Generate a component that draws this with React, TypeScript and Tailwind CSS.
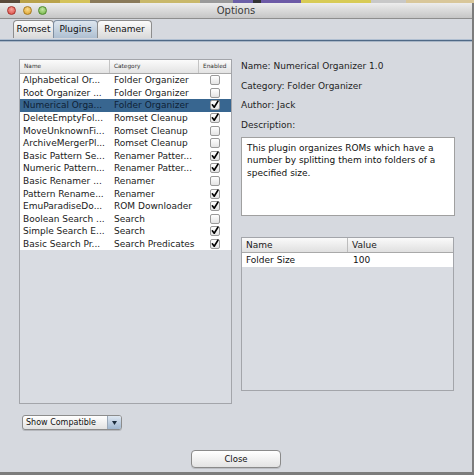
import React from "react";

const rows: [string, string, boolean][] = [
  ["Alphabetical Or...", "Folder Organizer", false],
  ["Root Organizer ...", "Folder Organizer", false],
  ["Numerical Orga...", "Folder Organizer", true],
  ["DeleteEmptyFol...", "Romset Cleanup", true],
  ["MoveUnknownFi...", "Romset Cleanup", false],
  ["ArchiveMergerPl...", "Romset Cleanup", false],
  ["Basic Pattern Se...", "Renamer Patter...", true],
  ["Numeric Pattern...", "Renamer Patter...", true],
  ["Basic Renamer ...", "Renamer", false],
  ["Pattern Rename...", "Renamer", true],
  ["EmuParadiseDo...", "ROM Downloader", true],
  ["Boolean Search ...", "Search", false],
  ["Simple Search E...", "Search", true],
  ["Basic Search Pr...", "Search Predicates", true],
];

function Check({ on }: { on: boolean }) {
  return (
    <div className="w-[10px] h-[10px] rounded-[2px] border border-[#9a9a9a] bg-gradient-to-b from-white to-[#e4e4e4] flex items-center justify-center">
      {on && (
        <svg width="9" height="9" viewBox="0 0 9 9" className="-mt-[1px]">
          <path d="M1.5 4.8 L3.6 7.6 L7.8 0.8" fill="none" stroke="#000" strokeWidth="1.8" strokeLinecap="round" strokeLinejoin="round" />
        </svg>
      )}
    </div>
  );
}

export default function App() {
  const font = { fontFamily: '"DejaVu Sans", sans-serif' };
  return (
    <div className="w-[474px] h-[475px] flex flex-col bg-[#7c7c7c] overflow-hidden" style={font}>
      {/* desktop strip */}
      <div className="h-[3px] flex shrink-0">
        <div className="w-[20px] bg-[#5a4a3a]" />
        <div className="w-[40px] bg-[#b9a24a]" />
        <div className="w-[30px] bg-[#d5c35a]" />
        <div className="w-[50px] bg-[#8a7a5a]" />
        <div className="w-[60px] bg-[#c9b86a]" />
        <div className="w-[33px] bg-[#9a9a9a]" />
        <div className="w-[20px] bg-[#6b5fa8]" />
        <div className="w-[8px] bg-[#333]" />
        <div className="w-[40px] bg-[#6d5aa6]" />
        <div className="w-[70px] bg-[#d8cb55]" />
        <div className="w-[35px] bg-[#c8c8c8]" />
        <div className="flex-1 bg-[#d9c79a]" />
      </div>
      <div className="w-[472px] h-[469px] flex flex-col bg-[#d6d9df]">
        {/* title bar */}
        <div className="h-[16px] shrink-0 grid grid-cols-[1fr_auto_1fr] items-center bg-gradient-to-b from-[#ededed] to-[#c6c6c6] border-b border-[#8e8e8e]">
          <div className="flex items-center pl-[7px] gap-[6.5px]">
            <div className="w-[9px] h-[9px] rounded-full bg-[radial-gradient(circle_at_50%_35%,#f6a39c,#d9453d)] border border-[#a8332d]" />
            <div className="w-[9px] h-[9px] rounded-full bg-[radial-gradient(circle_at_50%_35%,#f9dc8e,#dc9e27)] border border-[#a67a1f]" />
            <div className="w-[9px] h-[9px] rounded-full bg-[radial-gradient(circle_at_50%_35%,#c3e6a2,#6aaf3e)] border border-[#4f8a2d]" />
          </div>
          <div className="text-[10px] leading-[12px] text-[#3a3a3a]">Options</div>
          <div />
        </div>
        {/* tabs */}
        <div className="h-[20px] shrink-0 flex items-end pl-[13px] pb-[1px]">
          <div className="h-[18px] w-[41px] flex items-center justify-center text-[9px] text-[#111] rounded-t-[4px] border border-b-0 border-[#8d8d8d] bg-gradient-to-b from-[#fbfbfb] to-[#dadada]">Romset</div>
          <div className="h-[18px] w-[45px] -ml-px flex items-center justify-center text-[9px] text-[#111] rounded-t-[4px] border border-b-0 border-[#7f8fa2] bg-gradient-to-b from-[#dde6ef] to-[#aebfd1]">Plugins</div>
          <div className="h-[18px] w-[55px] -ml-px flex items-center justify-center text-[9px] text-[#111] rounded-t-[4px] border border-b-0 border-[#8d8d8d] bg-gradient-to-b from-[#fbfbfb] to-[#dadada]">Renamer</div>
        </div>
        <div className="h-[3px] shrink-0 border-t border-[#b0bfd1] bg-[#4f6986] border-b border-b-[#a9b6c6]" />
        {/* content */}
        <div className="flex-1 flex flex-col pl-[19px] pt-[17px]">
          <div className="flex h-[345px]">
            {/* plugin table */}
            <div className="w-[213px] h-full border border-[#a3a5aa] bg-[#d9dce2] flex flex-col">
              <div className="h-[14px] shrink-0 flex bg-gradient-to-b from-[#fbfbfb] to-[#e3e3e3] border-b border-[#a9a9a9] text-[5.8px] text-[#333] leading-[13px]">
                <div className="w-[90px] pl-[4px] border-r border-[#c4c4c4]">Name</div>
                <div className="w-[89px] pl-[4px] border-r border-[#c4c4c4]">Category</div>
                <div className="flex-1 pl-[4px]">Enabled</div>
              </div>
              {rows.map(([n, c, on], i) => {
                const sel = i === 2;
                return (
                  <div key={i} className={`h-[12.6px] shrink-0 flex items-center text-[9px] leading-[12px] ${sel ? "bg-[#386690] text-[#0e1f36]" : "bg-white text-[#1a1a1a]"}`}>
                    <div className="w-[90px] pl-[3px] whitespace-nowrap overflow-hidden">{n}</div>
                    <div className="w-[89px] pl-[4px] whitespace-nowrap overflow-hidden">{c}</div>
                    <div className="flex-1 flex justify-center pr-[1px]">
                      <Check on={on} />
                    </div>
                  </div>
                );
              })}
            </div>
            {/* details */}
            <div className="ml-[9px] w-[214px] flex flex-col text-[9px] text-[#1e1e1e]">
              <div className="h-[19.5px] pt-[1px] leading-[12px]">Name: Numerical Organizer 1.0</div>
              <div className="h-[19.5px] pt-[1px] leading-[12px]">Category: Folder Organizer</div>
              <div className="h-[19.5px] pt-[1px] leading-[12px]">Author: Jack</div>
              <div className="h-[19.5px] pt-[1px] leading-[12px]">Description:</div>
              <div className="h-[79px] bg-white border border-[#a0a0a0] pl-[5px] pr-[6px] pt-[4px] leading-[12.3px] text-[#111]">
                This plugin organizes ROMs which have a number by splitting them into folders of a specified size.
              </div>
              <div className="mt-[21px] h-[154px] w-[213px] border border-[#a3a5aa] bg-[#d9dce2] flex flex-col">
                <div className="h-[15px] shrink-0 flex bg-gradient-to-b from-[#fafafa] to-[#e0e0e0] border-b border-[#a9a9a9] leading-[14px] text-[#1a1a1a]">
                  <div className="w-[106px] pl-[4px] border-r border-[#bdbdbd]">Name</div>
                  <div className="flex-1 pl-[4px]">Value</div>
                </div>
                <div className="h-[14px] shrink-0 flex bg-white leading-[14px] text-[#111]">
                  <div className="w-[106px] pl-[4px]">Folder Size</div>
                  <div className="flex-1 pl-[5px]">100</div>
                </div>
              </div>
            </div>
          </div>
          {/* combo */}
          <div className="mt-[11px] ml-[3px] w-[100px] h-[15px] flex rounded-[3px] border border-[#8c8c8c] bg-gradient-to-b from-white to-[#e2e2e2] shadow-[0_1px_0_rgba(0,0,0,0.15)]">
            <div className="flex-1 pl-[3px] text-[8px] leading-[13px] text-[#111] whitespace-nowrap">Show Compatible</div>
            <div className="w-[14px] border-l border-[#9aa8b8] rounded-r-[2px] bg-gradient-to-b from-[#dfe8f2] to-[#9fb6cf] flex items-center justify-center">
              <svg width="5" height="4" viewBox="0 0 5 4"><path d="M0 0 H5 L2.5 4 Z" fill="#1a2a3a" /></svg>
            </div>
          </div>
        </div>
        {/* close */}
        <div className="h-[22px] shrink-0 flex items-start justify-center">
          <div className="w-[90px] h-[18px] rounded-[4px] border border-[#8a8a8a] bg-gradient-to-b from-white to-[#e3e3e3] shadow-[0_1px_0_rgba(0,0,0,0.12)] flex items-center justify-center text-[8.5px] text-[#111]">Close</div>
        </div>
      </div>
    </div>
  );
}
